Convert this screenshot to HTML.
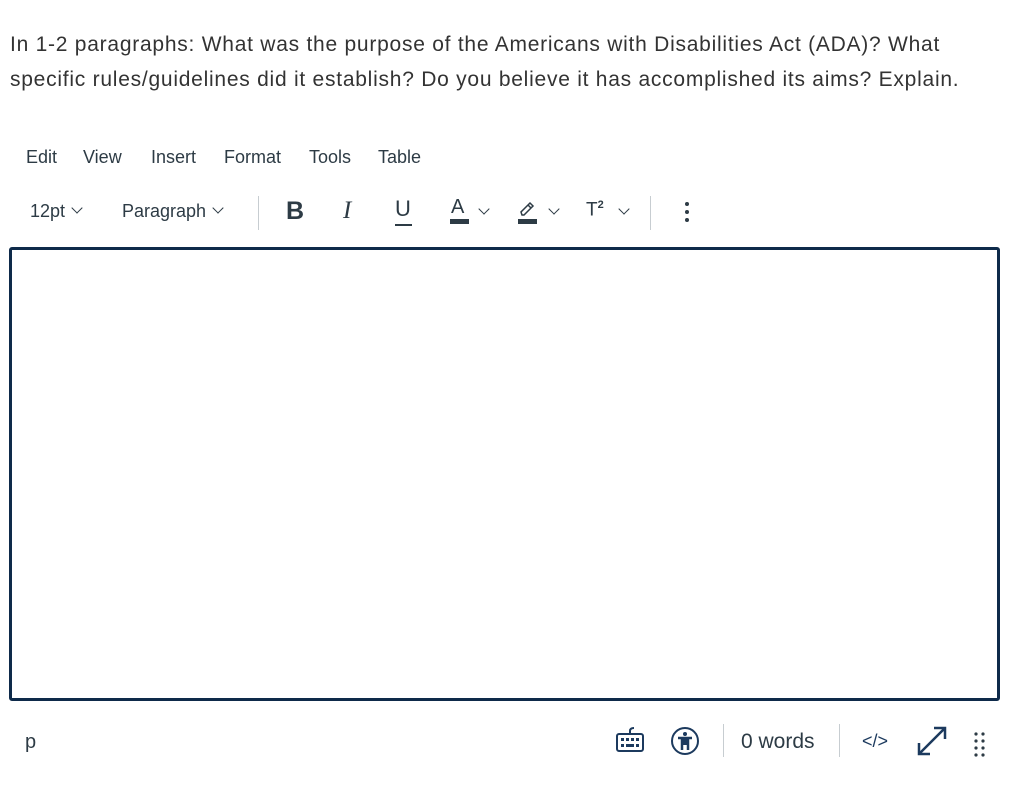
<!DOCTYPE html>
<html><head><style>
body{margin:0;width:1024px;height:789px;background:#fff;font-family:"Liberation Sans",sans-serif;color:#2d3b45;position:relative;overflow:hidden}
.a{position:absolute;white-space:nowrap}
.q{left:10px;top:27px;font-size:21px;letter-spacing:0.75px;line-height:35px;color:#333}
.m{top:147px;font-size:18px}
.t{top:201px;font-size:18px}
.chev{display:inline-block;width:7px;height:7px;border-right:1.2px solid #2d3b45;border-bottom:1.2px solid #2d3b45;transform:rotate(45deg);margin-left:8px;position:relative;top:-5px}
.ch{position:absolute;width:7px;height:7px;border-right:1.2px solid #2d3b45;border-bottom:1.2px solid #2d3b45;transform:rotate(45deg)}
.sep{position:absolute;width:1px;background:#c7cdd1}
</style></head><body>
<div class="a q">In 1-2 paragraphs: What was the purpose of the Americans with Disabilities Act (ADA)? What<br>specific rules/guidelines did it establish? Do you believe it has accomplished its aims? Explain.</div>
<div class="a m" style="left:26px">Edit</div>
<div class="a m" style="left:83px">View</div>
<div class="a m" style="left:151px">Insert</div>
<div class="a m" style="left:224px">Format</div>
<div class="a m" style="left:309px">Tools</div>
<div class="a m" style="left:378px">Table</div>
<div class="a t" style="left:30px">12pt<span class="chev"></span></div>
<div class="a t" style="left:122px">Paragraph<span class="chev"></span></div>
<div class="sep" style="left:258px;top:196px;height:34px"></div>
<div class="a" style="left:286px;top:197px;font-size:25px;font-weight:bold">B</div>
<div class="a" style="left:343px;top:197px;font-size:25px;font-family:'Liberation Serif',serif;font-style:italic">I</div>
<div class="a" style="left:395px;top:196px;font-size:22px">U</div>
<div style="position:absolute;left:395px;top:224px;width:17px;height:2px;background:#2d3b45"></div>
<div class="a" style="left:451px;top:196px;font-size:20px">A</div>
<div style="position:absolute;left:450px;top:219px;width:19px;height:5px;background:#2d3b45"></div>
<span class="ch" style="left:480px;top:205px"></span>
<svg style="position:absolute;left:518px;top:200px" width="20" height="18" viewBox="0 0 20 18" fill="none" stroke="#2d3b45" stroke-width="1.5"><path d="M4 15 L3 12 L12 3 L15 6 L6 15 Z M10 5 L13 8"/></svg>
<div style="position:absolute;left:518px;top:219px;width:19px;height:5px;background:#2d3b45"></div>
<span class="ch" style="left:550px;top:205px"></span>
<div class="a" style="left:586px;top:199px;font-size:19px">T<sup style="font-size:11px;font-weight:bold">2</sup></div>
<span class="ch" style="left:620px;top:205px"></span>
<div class="sep" style="left:650px;top:196px;height:34px"></div>
<svg style="position:absolute;left:684px;top:201px" width="6" height="24"><g fill="#2d3b45"><circle cx="3" cy="3" r="2"/><circle cx="3" cy="11" r="2"/><circle cx="3" cy="19" r="2"/></g></svg>
<div style="position:absolute;left:9px;top:247px;width:985px;height:448px;border:3px solid #0e2a4a;border-radius:3px"></div>
<div class="a" style="left:25px;top:731px;font-size:20px">p</div>
<svg style="position:absolute;left:614px;top:726px" width="32" height="30" viewBox="0 0 32 30" fill="none" stroke="#1c3a5e" stroke-width="2">
<rect x="3" y="8" width="26" height="17" rx="2"/><path d="M16 8 V5 Q16 2 20 2"/>
<g fill="#1c3a5e" stroke="none"><rect x="7" y="12" width="3" height="3"/><rect x="12" y="12" width="3" height="3"/><rect x="17" y="12" width="3" height="3"/><rect x="22" y="12" width="3" height="3"/><rect x="7" y="18" width="3" height="3"/><rect x="12" y="18" width="8" height="3"/><rect x="22" y="18" width="3" height="3"/></g></svg>
<svg style="position:absolute;left:669px;top:725px" width="32" height="32" viewBox="0 0 32 32" fill="none" stroke="#1c3a5e" stroke-width="2">
<circle cx="16" cy="16" r="13"/><circle cx="16" cy="9" r="2" fill="#1c3a5e" stroke="none"/><path d="M9 13 H23 M13 13 V25 M19 13 V25" stroke-width="2.5"/><rect x="13" y="13" width="6" height="7" fill="#1c3a5e" stroke="none"/></svg>
<div class="sep" style="left:723px;top:724px;height:33px"></div>
<div class="a" style="left:741px;top:730px;font-size:21px">0 words</div>
<div class="sep" style="left:839px;top:724px;height:33px"></div>
<div class="a" style="left:862px;top:731px;font-size:18px;color:#1c3a5e">&lt;/&gt;</div>
<svg style="position:absolute;left:915px;top:724px" width="34" height="34" viewBox="0 0 34 34" fill="none" stroke="#1c3a5e" stroke-width="2.5"><path d="M4 30 L30 4 M19 4 H30 V15 M4 19 V30 H15"/></svg>
<svg style="position:absolute;left:973px;top:731px" width="14" height="26"><g fill="#2d3b45"><circle cx="3" cy="3" r="1.6"/><circle cx="10" cy="3" r="1.6"/><circle cx="3" cy="10" r="1.6"/><circle cx="10" cy="10" r="1.6"/><circle cx="3" cy="17" r="1.6"/><circle cx="10" cy="17" r="1.6"/><circle cx="3" cy="24" r="1.6"/><circle cx="10" cy="24" r="1.6"/></g></svg>
</body></html>
